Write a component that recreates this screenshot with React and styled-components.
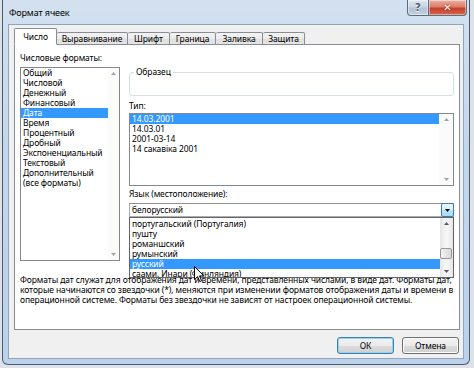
import React from 'react';
import styled, { createGlobalStyle } from 'styled-components';

const FONT = `"Noto Sans", "Open Sans", "DejaVu Sans", sans-serif`;
const FS = 8.5;

const Global = createGlobalStyle`
  html, body { margin: 0; padding: 0; }
  body {
    width: 474px; height: 368px; overflow: hidden;
    background: #dde2e8;
    font-family: ${FONT};
    font-size: ${FS}px;
    letter-spacing: -0.1px;
    color: #000;
  }
  * { box-sizing: border-box; }
`;

const Window = styled.div`
  margin-left: 2px;
  width: 468px;
  height: 365px;
  border: 1px solid #4b5b6e;
  border-top: none;
  border-radius: 0 0 6px 6px;
  background: linear-gradient(180deg, #d3e1f0 0%, #c3d7ec 40%, #bcd2ea 100%);
  display: flex;
  flex-direction: column;
`;

const TitleBar = styled.div`
  height: 24px;
  display: flex;
  justify-content: space-between;
  align-items: flex-start;
  flex-shrink: 0;
`;

const Title = styled.div`
  padding-left: 6px;
  line-height: 26px;
  font-size: 9px;
`;

const CaptionButtons = styled.div`
  display: flex;
  margin-right: 2px;
`;

const CaptionButton = styled.div`
  width: ${p => p.$w}px;
  height: 16px;
  display: flex;
  align-items: center;
  justify-content: center;
  border: 1px solid #5c6b7d;
  border-top: none;
  border-left: ${p => (p.$first ? '1px solid #5c6b7d' : 'none')};
  border-radius: ${p => (p.$first ? '0 0 0 4px' : '0 0 4px 0')};
  background: ${p =>
    p.$danger
      ? 'linear-gradient(180deg, #eab1a3 0%, #dc7f6a 45%, #c6402a 55%, #d3664b 100%)'
      : 'linear-gradient(180deg, #dfe7f0 0%, #c8d4e2 45%, #b3c2d4 55%, #c2d0df 100%)'};
  box-shadow: inset 0 0 0 1px rgba(255, 255, 255, 0.45);
  font-family: "DejaVu Sans", sans-serif;
  font-weight: bold;
  font-size: 10px;
  letter-spacing: 0;
  color: ${p => (p.$danger ? '#fff' : '#4e5f74')};
  text-shadow: ${p => (p.$danger ? '0 0 2px #7a1a0c' : '0 1px 0 #fff')};
`;

const Client = styled.div`
  flex: 1;
  margin: 0 5px 5px 5px;
  background: #f0f0f0;
  border: 1px solid #8fa4bd;
  display: flex;
  flex-direction: column;
  padding: 3px 3px 4px 5px;
`;

const TabsRow = styled.div`
  display: flex;
  align-items: flex-end;
  height: 17px;
  margin-bottom: -1px;
  position: relative;
  z-index: 1;
`;

const Tab = styled.div`
  width: ${p => p.$w}px;
  height: ${p => (p.$active ? 17 : 13)}px;
  display: flex;
  align-items: center;
  justify-content: center;
  border: 1px solid #898c95;
  border-left: ${p => (p.$first ? '1px solid #898c95' : 'none')};
  border-bottom: ${p => (p.$active ? '1px solid #fff' : '1px solid #898c95')};
  border-radius: 2px 2px 0 0;
  background: ${p => (p.$active ? '#fff' : 'linear-gradient(180deg, #f3f3f3 0%, #ebebeb 50%, #dedede 51%, #e5e5e5 100%)')};
  padding-top: ${p => (p.$active ? 0 : 1)}px;
  line-height: 10px;
  white-space: nowrap;
`;

const Panel = styled.div`
  height: 286px;
  flex-shrink: 0;
  background: #fff;
  border: 1px solid #898c95;
  padding: 7px 5px 0 5px;
`;

const PanelBody = styled.div`
  display: grid;
  grid-template-columns: 100px 325px;
  column-gap: 9px;
  align-items: start;
`;

const Column = styled.div`
  display: flex;
  flex-direction: column;
`;

const Label = styled.div`
  line-height: 12px;
  height: 12px;
  margin-top: ${p => p.$mt || 0}px;
  white-space: nowrap;
`;

const ListBox = styled.div`
  margin-top: ${p => p.$mt || 0}px;
  height: ${p => p.$h}px;
  border: 1px solid #828790;
  background: #fff;
  display: flex;
  overflow: hidden;
`;

const Rows = styled.div`
  flex: 1;
  min-width: 0;
`;

const Row = styled.div`
  height: 10px;
  line-height: 10px;
  padding-left: 2px;
  white-space: nowrap;
  background: ${p => (p.$selected ? '#3399ff' : 'transparent')};
  color: ${p => (p.$selected ? '#fff' : '#000')};
`;

const ScrollBar = styled.div`
  width: ${p => p.$w || 11}px;
  flex-shrink: 0;
  position: relative;
  display: flex;
  flex-direction: column;
  justify-content: space-between;
  align-items: center;
  background: ${p => (p.$active ? 'linear-gradient(90deg, #e6e6e6, #f5f5f5 40%, #f5f5f5 60%, #e6e6e6)' : '#fbfbfb')};
  padding: 4px 0;
`;

const Thumb = styled.div`
  position: absolute;
  left: 0;
  right: 1px;
  height: 11px;
  border: 1px solid #979797;
  border-radius: 2px;
  background: linear-gradient(90deg, #f2f2f2, #e6e6e6 50%, #d8d8d8);
`;

const Arrow = ({ up, color }) => (
  <svg width="5" height="3" viewBox="0 0 5 3">
    <path d={up ? 'M0 3 L2.5 0 L5 3 Z' : 'M0 0 L5 0 L2.5 3 Z'} fill={color} />
  </svg>
);

const GroupBox = styled.fieldset`
  margin: 14px 0 0 0;
  padding: 0 4px;
  height: 30px;
  border: 1px solid #d5dfe5;
  border-radius: 3px;
  min-width: 0;
`;

const Legend = styled.legend`
  padding: 0 2px;
  margin-left: 0;
  line-height: 12px;
`;

const ComboWrap = styled.div`
  position: relative;
  margin-top: 3px;
`;

const Combo = styled.div`
  height: 14px;
  border: 1px solid #abadb3;
  border-top-color: #8e8f8f;
  background: #fff;
  display: flex;
  align-items: stretch;
`;

const ComboText = styled.div`
  flex: 1;
  padding-left: 2px;
  line-height: 12px;
`;

const ComboButton = styled.div`
  width: 13px;
  display: flex;
  align-items: center;
  justify-content: center;
  border: 1px solid #3c7fb1;
  margin: -1px -1px -1px 0;
  border-radius: 2px;
  background: linear-gradient(180deg, #eaf6fd 0%, #d9f0fc 45%, #bee6fd 50%, #a7d9f5 100%);
`;

const DropList = styled.div`
  position: absolute;
  left: 0;
  right: 0;
  top: 14px;
  height: 61px;
  border: 1px solid #646464;
  background: #fff;
  display: flex;
  z-index: 5;
`;

const DropRows = styled.div`
  flex: 1;
  padding-top: 1px;
  overflow: hidden;
`;

const Cursor = styled.svg`
  position: absolute;
  left: 64px;
  top: 48px;
  z-index: 6;
`;

const Description = styled.div`
  margin-top: 14px;
  line-height: 10px;
`;

const DescLine = styled.div`
  white-space: nowrap;
`;

const ButtonsRow = styled.div`
  display: flex;
  justify-content: flex-end;
  gap: 8px;
  margin-top: 7px;
  padding-right: 1px;
`;

const Button = styled.div`
  width: 57px;
  height: 17px;
  display: flex;
  align-items: center;
  justify-content: center;
  border-radius: 3px;
  border: 1px solid ${p => (p.$default ? '#3c7fb1' : '#707070')};
  background: linear-gradient(180deg, #f2f2f2 0%, #ebebeb 50%, #dddddd 51%, #cfcfcf 100%);
  box-shadow: ${p => (p.$default ? 'inset 0 0 0 1px #98d1ef' : 'inset 0 0 0 1px #fcfcfc')};
`;

const formats = ['Общий', 'Числовой', 'Денежный', 'Финансовый', 'Дата', 'Время', 'Процентный', 'Дробный', 'Экспоненциальный', 'Текстовый', 'Дополнительный', '(все форматы)'];
const types = ['14.03.2001', '14.03.01', '2001-03-14', '14 сакавіка 2001'];
const langs = ['португальский (Португалия)', 'пушту', 'романшский', 'румынский', 'русский', 'саами, Инари (Финляндия)'];
const tabs = [
  { t: 'Число', w: 43 },
  { t: 'Выравнивание', w: 71 },
  { t: 'Шрифт', w: 42 },
  { t: 'Граница', w: 46 },
  { t: 'Заливка', w: 47 },
  { t: 'Защита', w: 42 },
];
const desc = [
  'Форматы дат служат для отображения дат и времени, представленных числами, в виде дат. Форматы дат,',
  'которые начинаются со звездочки (*), меняются при изменении форматов отображения даты и времени в',
  'операционной системе. Форматы без звездочки не зависят от настроек операционной системы.',
];

export default function App() {
  return (
    <>
      <Global />
      <Window>
        <TitleBar>
          <Title>Формат ячеек</Title>
          <CaptionButtons>
            <CaptionButton $w={22} $first>?</CaptionButton>
            <CaptionButton $w={38} $danger>✕</CaptionButton>
          </CaptionButtons>
        </TitleBar>
        <Client>
          <TabsRow>
            {tabs.map((tb, i) => (
              <Tab key={tb.t} $w={tb.w} $active={i === 0} $first={i === 0}>{tb.t}</Tab>
            ))}
          </TabsRow>
          <Panel>
            <PanelBody>
              <Column>
                <Label>Числовые форматы:</Label>
                <ListBox $mt={3} $h={194}>
                  <Rows>
                    {formats.map(f => (
                      <Row key={f} $selected={f === 'Дата'}>{f}</Row>
                    ))}
                  </Rows>
                  <ScrollBar>
                    <Arrow up color="#a3a3a3" />
                    <Arrow color="#a3a3a3" />
                  </ScrollBar>
                </ListBox>
              </Column>
              <Column>
                <GroupBox>
                  <Legend>Образец</Legend>
                </GroupBox>
                <Label $mt={4}>Тип:</Label>
                <ListBox $mt={1} $h={73}>
                  <Rows>
                    {types.map((t, i) => (
                      <Row key={t} $selected={i === 0}>{t}</Row>
                    ))}
                  </Rows>
                  <ScrollBar $w={14}>
                    <Arrow up color="#a3a3a3" />
                    <Arrow color="#a3a3a3" />
                  </ScrollBar>
                </ListBox>
                <Label $mt={2}>Язык (местоположение):</Label>
                <ComboWrap>
                  <Combo>
                    <ComboText>белорусский</ComboText>
                    <ComboButton>
                      <Arrow color="#000" />
                    </ComboButton>
                  </Combo>
                  <DropList>
                    <DropRows>
                      {langs.map(l => (
                        <Row key={l} $selected={l === 'русский'}>{l}</Row>
                      ))}
                    </DropRows>
                    <ScrollBar $w={13} $active>
                      <Arrow up color="#5a5a5a" />
                      <Thumb style={{ top: 30 }} />
                      <Arrow color="#5a5a5a" />
                    </ScrollBar>
                    <Cursor width="11" height="17" viewBox="0 0 11 17">
                      <path d="M0.5 0.5 L0.5 13.5 L3.6 10.6 L5.8 15.6 L7.6 14.8 L5.5 9.9 L9.8 9.9 Z" fill="#fff" stroke="#000" strokeWidth="1" />
                    </Cursor>
                  </DropList>
                </ComboWrap>
              </Column>
            </PanelBody>
            <Description>
              {desc.map(l => (
                <DescLine key={l}>{l}</DescLine>
              ))}
            </Description>
          </Panel>
          <ButtonsRow>
            <Button $default>ОК</Button>
            <Button>Отмена</Button>
          </ButtonsRow>
        </Client>
      </Window>
    </>
  );
}
